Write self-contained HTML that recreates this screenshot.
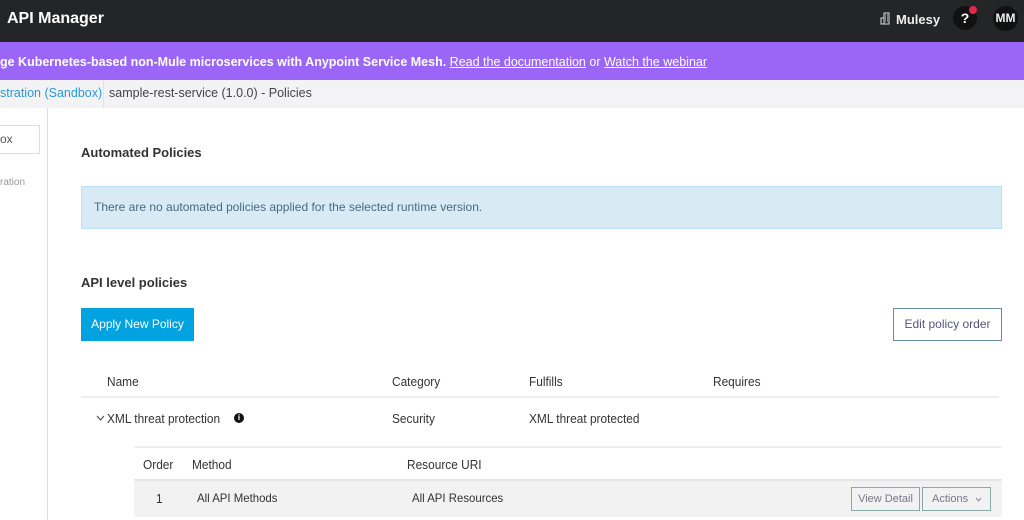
<!DOCTYPE html>
<html><head><meta charset="utf-8"><style>
*{margin:0;padding:0;box-sizing:border-box}
body{width:1024px;height:520px;overflow:hidden;background:#fff;font-family:"Liberation Sans",sans-serif;color:#333;position:relative}
.a{position:absolute;white-space:nowrap}
.n{transform:scaleX(0.95);transform-origin:left center}
</style></head><body>
<div class="a" style="left:0;top:0;width:1024px;height:42px;background:#242526"></div>
<div class="a" style="left:7px;top:10px;color:#fff;font-size:16px;font-weight:bold">API Manager</div>
<svg class="a" style="left:880px;top:12px" width="12" height="13" viewBox="0 0 12 13"><path d="M4 1h5v11H4zM1 6h3v6H1zM5 3h1M7 3h1M5 5h1M7 5h1M5 7h1M7 7h1M5 9h1M7 9h1" stroke="#ddd" fill="none" stroke-width="1"/></svg>
<div class="a" style="left:896px;top:12px;color:#eee;font-size:13px;font-weight:bold">Mulesy</div>
<div class="a" style="left:953px;top:6px;width:24px;height:24px;border-radius:50%;background:#111;color:#fff;font-size:14px;font-weight:bold;text-align:center;line-height:24px">?</div>
<div class="a" style="left:969px;top:6px;width:8px;height:8px;border-radius:50%;background:#e0284a"></div>
<div class="a" style="left:993px;top:6px;width:25px;height:25px;border-radius:50%;background:#111;color:#eee;font-size:12px;font-weight:bold;text-align:center;line-height:25px">MM</div>
<div class="a" style="left:0;top:42px;width:1024px;height:38px;background:#9b66f7"></div>
<div class="a" style="left:0;top:55px;color:#fff;font-size:12.5px"><b>ge Kubernetes-based non-Mule microservices with Anypoint Service Mesh.</b> <u>Read the documentation</u> or <u>Watch the webinar</u></div>
<div class="a" style="left:0;top:80px;width:1024px;height:28px;background:#f3f3f5"></div>
<div class="a" style="left:0;top:86px;font-size:12.5px;color:#2b9ad4">stration (Sandbox)</div>
<div class="a" style="left:103px;top:80px;width:1px;height:28px;background:#e2e2e2"></div>
<div class="a" style="left:109px;top:86px;font-size:12.5px;color:#444">sample-rest-service (1.0.0) - Policies</div>
<div class="a" style="left:47px;top:108px;width:1px;height:412px;background:#ddd"></div>
<div class="a" style="left:-5px;top:125px;width:45px;height:29px;border:1px solid #ddd;background:#fff"></div>
<div class="a" style="left:0;top:132px;font-size:12px;color:#555">ox</div>
<div class="a" style="left:0;top:177px;font-size:10px;color:#999">ration</div>
<div class="a" style="left:81px;top:145px;font-size:13px;font-weight:bold;color:#333">Automated Policies</div>
<div class="a" style="left:81px;top:186px;width:921px;height:43px;background:#d8ebf5;border:1px solid #bfe0ef"></div>
<div class="a" style="left:94px;top:200px;font-size:12px;color:#4a6a80">There are no automated policies applied for the selected runtime version.</div>
<div class="a" style="left:81px;top:275px;font-size:13px;font-weight:bold;color:#333">API level policies</div>
<div class="a" style="left:81px;top:308px;width:113px;height:33px;background:#00a2df;color:#fff;font-size:12px;text-align:center;line-height:33px">Apply New Policy</div>
<div class="a" style="left:893px;top:308px;width:109px;height:33px;border:1px solid #6a8b9a;color:#557;font-size:12px;text-align:center;line-height:31px">Edit policy order</div>
<div class="a n" style="left:107px;top:375px;font-size:12.5px">Name</div>
<div class="a n" style="left:392px;top:375px;font-size:12.5px">Category</div>
<div class="a n" style="left:529px;top:375px;font-size:12.5px">Fulfills</div>
<div class="a n" style="left:713px;top:375px;font-size:12.5px">Requires</div>
<div class="a" style="left:81px;top:396px;width:918px;height:2px;background:#eee"></div>
<svg class="a" style="left:96px;top:415px" width="9" height="6" viewBox="0 0 9 6"><path d="M1 1l3.5 4L8 1" stroke="#444" fill="none" stroke-width="1"/></svg>
<div class="a n" style="left:107px;top:412px;font-size:12.5px">XML threat protection</div>
<div class="a" style="left:234px;top:413px;width:10px;height:10px;border-radius:50%;background:#111;color:#fff;font-size:8px;font-weight:bold;text-align:center;line-height:10px">i</div>
<div class="a n" style="left:392px;top:412px;font-size:12.5px">Security</div>
<div class="a n" style="left:529px;top:412px;font-size:12.5px">XML threat protected</div>
<div class="a" style="left:134px;top:446px;width:868px;height:2px;background:#eee"></div>
<div class="a n" style="left:143px;top:458px;font-size:12.5px">Order</div>
<div class="a n" style="left:192px;top:458px;font-size:12.5px">Method</div>
<div class="a n" style="left:407px;top:458px;font-size:12.5px">Resource URI</div>
<div class="a" style="left:134px;top:479px;width:868px;height:2px;background:#e6e6e6"></div>
<div class="a" style="left:134px;top:481px;width:868px;height:36px;background:#f2f2f3"></div>
<div class="a n" style="left:156px;top:492px;font-size:12.5px">1</div>
<div class="a n" style="left:197px;top:491px;font-size:12px">All API Methods</div>
<div class="a n" style="left:412px;top:491px;font-size:12px">All API Resources</div>
<div class="a" style="left:851px;top:487px;width:69px;height:24px;border:1px solid #8aa;color:#778;font-size:11px;text-align:center;line-height:22px">View Detail</div>
<div class="a" style="left:922px;top:487px;width:69px;height:24px;border:1px solid #8aa;color:#778;font-size:11px;line-height:22px;padding-left:9px">Actions</div>
<svg class="a" style="left:975px;top:497px" width="7" height="5" viewBox="0 0 7 5"><path d="M1 1l2.5 3L6 1" stroke="#889" fill="none" stroke-width="1"/></svg>
</body></html>
